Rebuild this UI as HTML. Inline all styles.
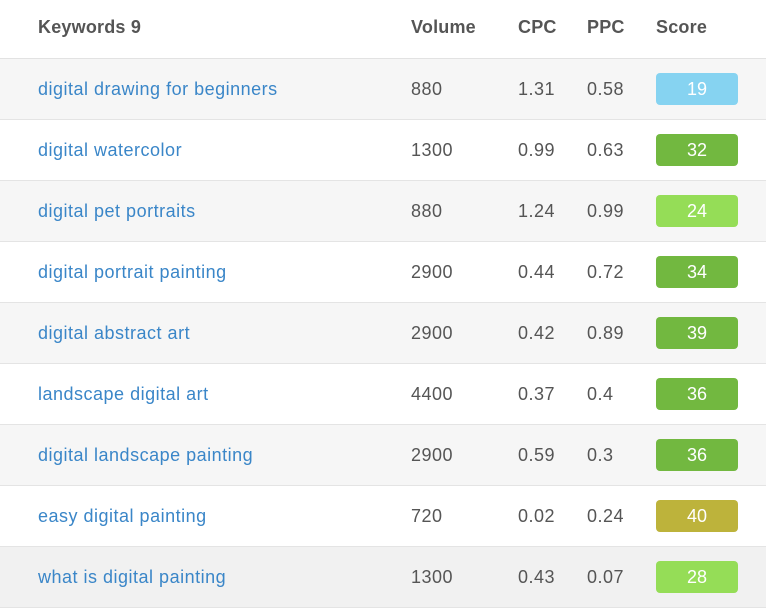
<!DOCTYPE html>
<html><head><style>
body{margin:0;width:768px;height:612px;background:#fff;font-family:"Liberation Sans",sans-serif;overflow:hidden}
.h{position:absolute;top:0;left:0;width:766px;height:58px;border-bottom:1px solid #e2e2e2;font-weight:bold;color:#555;font-size:18px;letter-spacing:0.2px}
.r{position:absolute;left:0;width:766px;height:60px;border-bottom:1px solid #e4e4e4;font-size:18px;color:#555;letter-spacing:0.5px}
.c{position:absolute;line-height:60px;top:0}
.h .c{line-height:54px}
.k{left:38px;color:#3a86c8}
.v{left:411px}.p{left:518px}.q{left:587px}.s{left:656px}
.b{position:absolute;left:656px;top:14px;width:82px;height:32px;border-radius:4px;color:#fff;text-align:center;line-height:32px;letter-spacing:0}
</style></head><body>
<div class="h"><span class="c" style="left:38px">Keywords 9</span><span class="c v">Volume</span><span class="c p">CPC</span><span class="c q">PPC</span><span class="c s">Score</span></div>
<div class="r" style="top:59px;background:#f6f6f6"><span class="c k">digital drawing for beginners</span><span class="c v">880</span><span class="c p">1.31</span><span class="c q">0.58</span><div class="b" style="background:#86d3f1">19</div></div>
<div class="r" style="top:120px"><span class="c k">digital watercolor</span><span class="c v">1300</span><span class="c p">0.99</span><span class="c q">0.63</span><div class="b" style="background:#72b840">32</div></div>
<div class="r" style="top:181px;background:#f6f6f6"><span class="c k">digital pet portraits</span><span class="c v">880</span><span class="c p">1.24</span><span class="c q">0.99</span><div class="b" style="background:#95dd57">24</div></div>
<div class="r" style="top:242px"><span class="c k">digital portrait painting</span><span class="c v">2900</span><span class="c p">0.44</span><span class="c q">0.72</span><div class="b" style="background:#72b840">34</div></div>
<div class="r" style="top:303px;background:#f6f6f6"><span class="c k">digital abstract art</span><span class="c v">2900</span><span class="c p">0.42</span><span class="c q">0.89</span><div class="b" style="background:#72b840">39</div></div>
<div class="r" style="top:364px"><span class="c k">landscape digital art</span><span class="c v">4400</span><span class="c p">0.37</span><span class="c q">0.4</span><div class="b" style="background:#72b840">36</div></div>
<div class="r" style="top:425px;background:#f6f6f6"><span class="c k">digital landscape painting</span><span class="c v">2900</span><span class="c p">0.59</span><span class="c q">0.3</span><div class="b" style="background:#72b840">36</div></div>
<div class="r" style="top:486px"><span class="c k">easy digital painting</span><span class="c v">720</span><span class="c p">0.02</span><span class="c q">0.24</span><div class="b" style="background:#bdb33b">40</div></div>
<div class="r" style="top:547px;background:#f1f1f1"><span class="c k">what is digital painting</span><span class="c v">1300</span><span class="c p">0.43</span><span class="c q">0.07</span><div class="b" style="background:#95dd57">28</div></div>
</body></html>
